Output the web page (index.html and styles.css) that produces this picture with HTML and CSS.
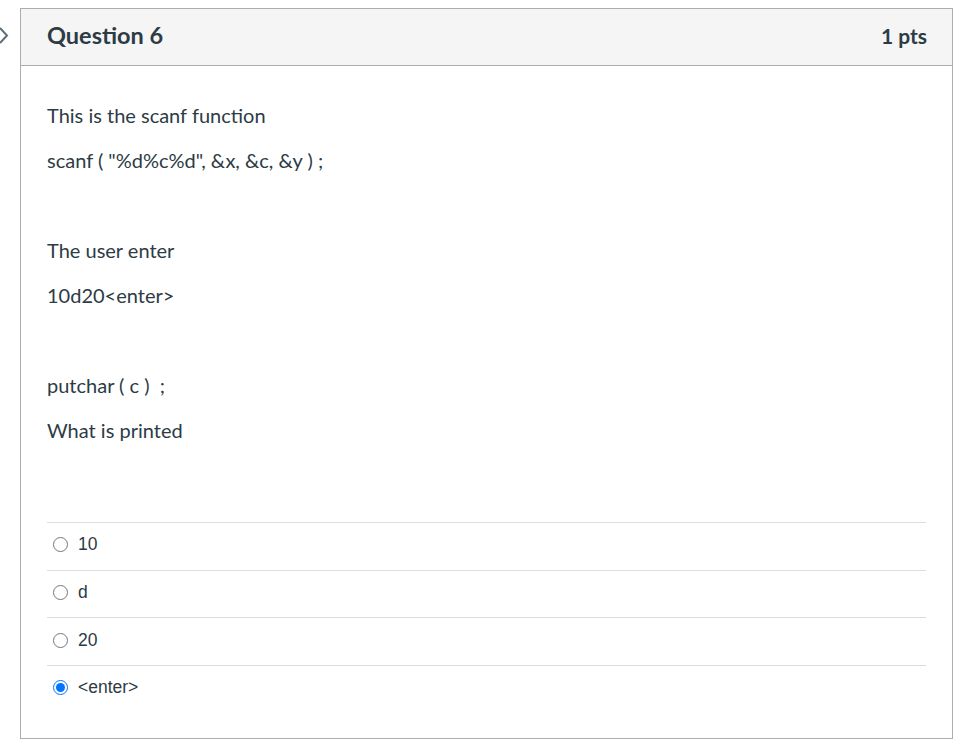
FILE: index.html
```html
<!DOCTYPE html>
<html>
<head>
<meta charset="utf-8">
<link rel="stylesheet" href="styles.css">
</head>
<body>
<div class="page">
  <div class="nav">
    <svg class="chev" width="10" height="20" viewBox="0 0 10 20"><path d="M0 2 L7 9.5 L0 17" fill="none" stroke="#5f6e79" stroke-width="2"/></svg>
  </div>
  <div class="question">
    <div class="header">
      <h2 class="title">Question 6</h2>
      <div class="pts">1 pts</div>
    </div>
    <div class="content">
      <div class="text">
        <p>This is the scanf function</p>
        <p>scanf ( "%d%c%d", &amp;x, &amp;c, &amp;y ) ;</p>
        <p>&nbsp;</p>
        <p>The user enter</p>
        <p>10d20&lt;enter&gt;</p>
        <p>&nbsp;</p>
        <p>putchar ( c )&nbsp; ;</p>
        <p>What is printed</p>
      </div>
      <div class="answers">
        <label class="answer"><input type="radio" name="q6"><span>10</span></label>
        <label class="answer"><input type="radio" name="q6"><span>d</span></label>
        <label class="answer"><input type="radio" name="q6"><span>20</span></label>
        <label class="answer"><input type="radio" name="q6" checked><span>&lt;enter&gt;</span></label>
      </div>
    </div>
  </div>
</div>
</body>
</html>
```
FILE: styles.css
```css
* { box-sizing: border-box; }
html, body { margin: 0; padding: 0; background: #fff; }
body { font-family: Lato, "Open Sans", sans-serif; color: #2d3b45; }
.page { display: flex; padding-top: 8px; }
.nav { width: 20px; flex: none; padding-top: 18px; }
.chev { display: block; }
.question { width: 933px; height: 731px; border: 1px solid #adadad; display: flex; flex-direction: column; }
.header { height: 57px; background: #f5f5f5; border-bottom: 1px solid #adadad; display: flex; align-items: center; justify-content: space-between; padding: 0 25px 4px 26px; }
.title { margin: 0; font-size: 23.5px; font-weight: 700; }
.pts { font-size: 21px; font-weight: 700; }
.content { padding: 34px 26px 0 26px; }
.text { font-size: 20px; }
.text p { margin: 0 0 15px; line-height: 30px; }
.answers { margin-top: 77px; }
.answer { display: flex; align-items: center; height: 47.7px; padding-bottom: 3px; border-top: 1px solid #ddd; font-family: "Liberation Sans", Arial, sans-serif; font-size: 17.5px; color: #2d3b45; }
.answer input { margin: 0 10px 0 6px; width: 15px; height: 15px; }
```
